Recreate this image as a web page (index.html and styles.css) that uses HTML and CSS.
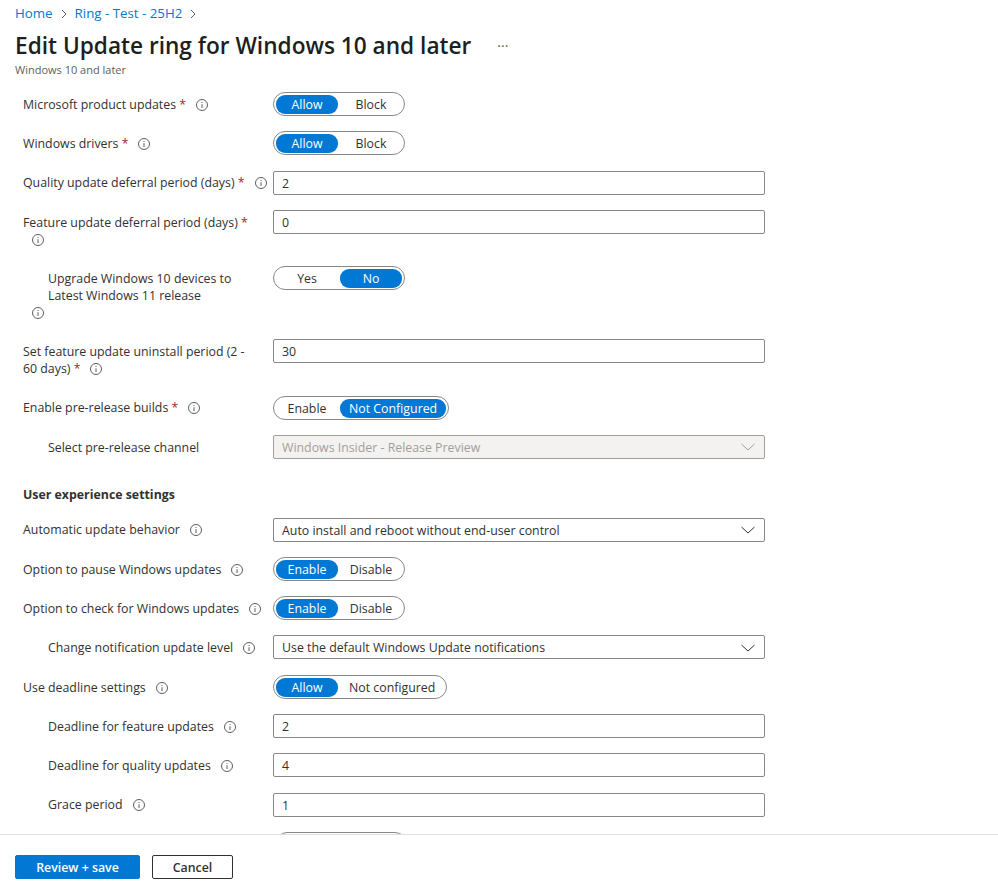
FILE: index.html
```html
<!DOCTYPE html>
<html lang="en">
<head>
  <meta charset="UTF-8">
  <meta name="viewport" content="width=device-width, initial-scale=1.0">
  <title>Edit Update ring for Windows 10 and later</title>
  <link rel="stylesheet" href="styles.css">
</head>
<body>
  <svg class="defs" width="0" height="0">
    <symbol id="info" viewBox="0 0 12 12">
      <circle cx="6" cy="6" r="5.5" fill="none" stroke="#605e5c"/>
      <path d="M6 5.2v3.8" stroke="#605e5c" fill="none"/>
      <rect x="5.5" y="3" width="1" height="1" fill="#605e5c"/>
    </symbol>
    <symbol id="chevron" viewBox="0 0 16 8">
      <path d="M1.5 1l6.5 6 6.5-6" fill="none" stroke="currentColor"/>
    </symbol>
    <symbol id="crumb" viewBox="0 0 6 10">
      <path d="M1 1l4 4-4 4" fill="none" stroke="#605e5c"/>
    </symbol>
  </svg>

  <main class="page">
    <nav class="breadcrumb">
      <a href="#">Home</a>
      <svg class="crumb-sep"><use href="#crumb"/></svg>
      <a href="#">Ring - Test - 25H2</a>
      <svg class="crumb-sep"><use href="#crumb"/></svg>
    </nav>

    <div class="title-row">
      <h1>Edit Update ring for Windows 10 and later</h1>
      <span class="more">···</span>
    </div>
    <div class="subtitle">Windows 10 and later</div>

    <form class="form">
      <div class="row">
        <div class="label">Microsoft product updates <span class="req">*</span><svg class="info"><use href="#info"/></svg></div>
        <div class="toggle"><span class="opt on">Allow</span><span class="opt">Block</span></div>
      </div>
      <div class="row">
        <div class="label">Windows drivers <span class="req">*</span><svg class="info"><use href="#info"/></svg></div>
        <div class="toggle"><span class="opt on">Allow</span><span class="opt">Block</span></div>
      </div>
      <div class="row">
        <div class="label">Quality update deferral period (days) <span class="req">*</span><svg class="info"><use href="#info"/></svg></div>
        <div class="input">2</div>
      </div>
      <div class="row">
        <div class="label">Feature update deferral period (days) <span class="req">*</span> <svg class="info info-wrap"><use href="#info"/></svg></div>
        <div class="input">0</div>
      </div>
      <div class="row">
        <div class="label sub">Upgrade Windows 10 devices to Latest Windows 11 release<svg class="info info-back"><use href="#info"/></svg></div>
        <div class="toggle"><span class="opt">Yes</span><span class="opt on">No</span></div>
      </div>
      <div class="row">
        <div class="label">Set feature update uninstall period (2 -<br>60 days) <span class="req">*</span><svg class="info"><use href="#info"/></svg></div>
        <div class="input">30</div>
      </div>
      <div class="row">
        <div class="label">Enable pre-release builds <span class="req">*</span><svg class="info"><use href="#info"/></svg></div>
        <div class="toggle"><span class="opt">Enable</span><span class="opt on">Not Configured</span></div>
      </div>
      <div class="row">
        <div class="label sub">Select pre-release channel</div>
        <div class="input select disabled">Windows Insider - Release Preview<svg class="chev"><use href="#chevron"/></svg></div>
      </div>

      <h2 class="section">User experience settings</h2>

      <div class="row">
        <div class="label">Automatic update behavior<svg class="info"><use href="#info"/></svg></div>
        <div class="input select">Auto install and reboot without end-user control<svg class="chev"><use href="#chevron"/></svg></div>
      </div>
      <div class="row">
        <div class="label">Option to pause Windows updates<svg class="info"><use href="#info"/></svg></div>
        <div class="toggle"><span class="opt on">Enable</span><span class="opt">Disable</span></div>
      </div>
      <div class="row">
        <div class="label">Option to check for Windows updates<svg class="info"><use href="#info"/></svg></div>
        <div class="toggle"><span class="opt on">Enable</span><span class="opt">Disable</span></div>
      </div>
      <div class="row">
        <div class="label sub">Change notification update level<svg class="info"><use href="#info"/></svg></div>
        <div class="input select">Use the default Windows Update notifications<svg class="chev"><use href="#chevron"/></svg></div>
      </div>
      <div class="row">
        <div class="label">Use deadline settings<svg class="info"><use href="#info"/></svg></div>
        <div class="toggle"><span class="opt on">Allow</span><span class="opt">Not configured</span></div>
      </div>
      <div class="row">
        <div class="label sub">Deadline for feature updates<svg class="info"><use href="#info"/></svg></div>
        <div class="input">2</div>
      </div>
      <div class="row">
        <div class="label sub">Deadline for quality updates<svg class="info"><use href="#info"/></svg></div>
        <div class="input">4</div>
      </div>
      <div class="row">
        <div class="label sub">Grace period<svg class="info"><use href="#info"/></svg></div>
        <div class="input">1</div>
      </div>
      <div class="row">
        <div class="label sub"></div>
        <div class="toggle toggle-cut"></div>
      </div>
    </form>
  </main>

  <footer class="footer">
    <button class="btn primary" type="button">Review + save</button>
    <button class="btn" type="button">Cancel</button>
  </footer>
</body>
</html>
```

FILE: styles.css
```css
html, body {
  height: 100%;
}

body {
  margin: 0;
  display: flex;
  flex-direction: column;
  height: 895px;
  overflow: hidden;
  background-color: #fff;
  color: #323130;
  font-family: "Open Sans", "Noto Sans", Arial, sans-serif;
  font-size: 12.35px;
}

.defs {
  position: absolute;
}

.page {
  flex: 1;
  min-height: 0;
  overflow: hidden;
  padding: 0 15px;
}

.breadcrumb {
  display: flex;
  align-items: center;
  height: 26px;
  font-size: 13.3px;
}

.breadcrumb a {
  color: #0078d4;
  text-decoration: none;
}

.crumb-sep {
  width: 6px;
  height: 10px;
  margin: 1px 8px 0 8px;
}

.title-row {
  display: flex;
  align-items: center;
  height: 38px;
}

h1 {
  margin: 0;
  font-size: 22.65px;
  font-weight: 600;
  color: #201f1e;
}

.more {
  margin-left: 26px;
  color: #605e5c;
  font-size: 14px;
}

.subtitle {
  height: 28px;
  font-size: 11px;
  line-height: 12px;
  color: #605e5c;
}

.form {
  padding-left: 8px;
}

.row {
  display: flex;
  align-items: flex-start;
  margin-bottom: 15.28px;
}

.label {
  flex: none;
  width: 250px;
  box-sizing: border-box;
  padding: 3.8px 5px 3.2px 0;
  line-height: 17px;
}

.label.sub {
  padding-left: 25px;
}

.req {
  color: #a4262c;
}

.info {
  display: inline-block;
  width: 12px;
  height: 12px;
  margin-left: 10px;
  vertical-align: -2px;
}

.info-wrap,
.info-back {
  display: block;
  margin-left: 9px;
  margin-top: 3px;
  margin-bottom: 2px;
}

.info-back {
  margin-left: -16px;
}

.toggle {
  display: flex;
  gap: 2px;
  height: 24px;
  box-sizing: border-box;
  padding: 2px;
  border: 1px solid #8a8886;
  border-radius: 12px;
  line-height: 18px;
}

.toggle-cut {
  width: 132px;
  margin-left: 2px;
}

.opt {
  min-width: 44px;
  padding: 1px 9px 0;
  height: 18px;
  box-sizing: content-box;
  line-height: 18px;
  margin-bottom: -1px;
  border-radius: 9px;
  text-align: center;
}

.opt.on {
  background-color: #0078d4;
  color: #fff;
}

.input {
  display: flex;
  align-items: center;
  justify-content: space-between;
  width: 492px;
  height: 24px;
  box-sizing: border-box;
  padding: 1px 8px 0;
  border: 1px solid #8a8886;
  border-radius: 2px;
}

.select.disabled {
  background-color: #f3f2f1;
  border-color: #a19f9d;
  color: #a19f9d;
}

.chev {
  width: 16px;
  height: 8px;
  color: #323130;
}

.disabled .chev {
  color: #a19f9d;
}

.section {
  margin: 26.95px 0 14.95px;
  font-size: 12.35px;
  line-height: 17px;
  font-weight: 700;
}

.footer {
  flex: none;
  display: flex;
  gap: 12px;
  height: 61px;
  box-sizing: border-box;
  padding: 20px 15px 0;
  border-top: 1px solid #e1dfdd;
}

.btn {
  height: 24px;
  width: 81px;
  padding: 0;
  border: 1px solid #323130;
  border-radius: 2px;
  background-color: #fff;
  color: #323130;
  font-family: inherit;
  font-size: 12.35px;
  font-weight: 600;
}

.btn.primary {
  width: 125px;
  border-color: #0078d4;
  background-color: #0078d4;
  color: #fff;
}
```
